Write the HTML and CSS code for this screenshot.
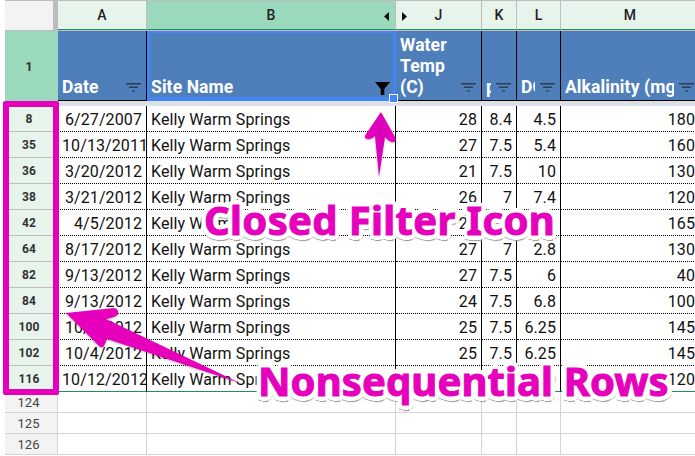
FILE: index.html
```html
<!DOCTYPE html>
<html lang="en">
<head>
<meta charset="utf-8">
<title>Filtered spreadsheet</title>
<link rel="stylesheet" href="styles.css">
</head>
<body>
<svg class="defs" width="0" height="0" aria-hidden="true">
  <symbol id="fl" viewBox="0 0 15 9"><path d="M0 0h15v1.4H0zM3 3.6h9V5H3zM6 7.2h3v1.4H6z"/></symbol>
</svg>
<main class="sheet">
  <div class="row colhead">
    <div class="corner"></div>
    <div class="c">A</div>
    <div class="c selcol">B<svg class="tri tri-l" viewBox="0 0 5 9"><path d="M5 0v9L0 4.5z"/></svg></div>
    <div class="c"><svg class="tri tri-r" viewBox="0 0 5 9"><path d="M0 0v9l5-4.5z"/></svg>J</div>
    <div class="c">K</div>
    <div class="c">L</div>
    <div class="c">M</div>
  </div>
  <div class="row head">
    <div class="rh rh-sel">1</div>
    <div class="hc"><span class="lb">Date</span><svg class="fi"><use href="#fl"/></svg></div>
    <div class="hc hc-sel"><span class="lb">Site Name</span><svg class="closed" viewBox="0 0 15 13"><path d="M0 0h15L9.3 7v6H5.700V7z"/></svg></div>
    <div class="hc"><span class="lb wrap">Water Temp (C)</span><svg class="fi"><use href="#fl"/></svg></div>
    <div class="hc"><span class="lb">pH</span><svg class="fi"><use href="#fl"/></svg></div>
    <div class="hc"><span class="lb">DO (mg/L)</span><svg class="fi"><use href="#fl"/></svg></div>
    <div class="hc"><span class="lb">Alkalinity (mg/L)</span><svg class="fi"><use href="#fl"/></svg></div>
  </div>
  <div class="freeze"></div>
  <div class="row data"><div class="rh">8</div><div class="n">6/27/2007</div><div class="t">Kelly Warm Springs</div><div class="n">28</div><div class="n">8.4</div><div class="n">4.5</div><div class="n">180</div></div>
  <div class="row data"><div class="rh">35</div><div class="n">10/13/2011</div><div class="t">Kelly Warm Springs</div><div class="n">27</div><div class="n">7.5</div><div class="n">5.4</div><div class="n">160</div></div>
  <div class="row data"><div class="rh">36</div><div class="n">3/20/2012</div><div class="t">Kelly Warm Springs</div><div class="n">21</div><div class="n">7.5</div><div class="n">10</div><div class="n">130</div></div>
  <div class="row data"><div class="rh">38</div><div class="n">3/21/2012</div><div class="t">Kelly Warm Springs</div><div class="n">26</div><div class="n">7</div><div class="n">7.4</div><div class="n">120</div></div>
  <div class="row data"><div class="rh">42</div><div class="n">4/5/2012</div><div class="t">Kelly Warm Springs</div><div class="n">25</div><div class="n">7.5</div><div class="n">7</div><div class="n">165</div></div>
  <div class="row data"><div class="rh">64</div><div class="n">8/17/2012</div><div class="t">Kelly Warm Springs</div><div class="n">27</div><div class="n">7</div><div class="n">2.8</div><div class="n">130</div></div>
  <div class="row data"><div class="rh">82</div><div class="n">9/13/2012</div><div class="t">Kelly Warm Springs</div><div class="n">27</div><div class="n">7.5</div><div class="n">6</div><div class="n">40</div></div>
  <div class="row data"><div class="rh">84</div><div class="n">9/13/2012</div><div class="t">Kelly Warm Springs</div><div class="n">24</div><div class="n">7.5</div><div class="n">6.8</div><div class="n">100</div></div>
  <div class="row data"><div class="rh">100</div><div class="n">10/4/2012</div><div class="t">Kelly Warm Springs</div><div class="n">25</div><div class="n">7.5</div><div class="n">6.25</div><div class="n">145</div></div>
  <div class="row data"><div class="rh">102</div><div class="n">10/4/2012</div><div class="t">Kelly Warm Springs</div><div class="n">25</div><div class="n">7.5</div><div class="n">6.25</div><div class="n">145</div></div>
  <div class="row data last"><div class="rh">116</div><div class="n">10/12/2012</div><div class="t">Kelly Warm Springs</div><div class="n">25</div><div class="n">7.5</div><div class="n">10</div><div class="n">120</div></div>
  <div class="row empty"><div class="rh">124</div><div></div><div></div><div></div><div></div><div></div><div></div></div>
  <div class="row empty"><div class="rh">125</div><div></div><div></div><div></div><div></div><div></div><div></div></div>
  <div class="row empty"><div class="rh">126</div><div></div><div></div><div></div><div></div><div></div><div></div></div>
</main>

<div class="handle"></div>
<div class="rowbox"></div>
<svg class="arrows" viewBox="0 0 695 456" width="695" height="456" aria-hidden="true">
  <defs>
    <linearGradient id="mg" x1="0" x2="1" y1="0" y2="0">
      <stop offset="0" stop-color="#f000c0"/><stop offset=".5" stop-color="#d800b8"/><stop offset="1" stop-color="#f000c4"/>
    </linearGradient>
  </defs>
  <g class="arrow">
    <path fill="url(#mg)" d="M381 112L395 137Q397 142 393 142Q390 143 385 137L379 177L375 136Q371 140 368 139Q363 139 366 134Z"/>
    <path fill="#e600bc" d="M66 313L114 308Q119 309 118 314Q117 317 106 319L240 383L107 339L104 346Q101 349 98 345Z"/>
  </g>
</svg>
<div class="note note-filter">Closed Filter Icon</div>
<div class="note note-rows">Nonsequential Rows</div>
</body>
</html>
```

FILE: styles.css
```css
* { box-sizing: border-box; }

html, body {
  margin: 0;
  height: 100%;
  overflow: hidden;
  background: #fff;
}

.defs { position: absolute; }

.sheet {
  width: 695px;
  height: 456px;
  padding-left: 5px;
  overflow: hidden;
  display: flex;
  flex-direction: column;
  font-family: Roboto, "Liberation Sans", sans-serif;
  font-size: 16px;
  letter-spacing: 0.1px;
  color: #111;
}

.row {
  display: grid;
  grid-template-columns: 53px 89px 249px 86px 35px 44px 139px;
  flex: none;
}

/* column letters */
.colhead {
  height: 31px;
  background: #bdbdbd;
  padding-top: 1px;
  padding-bottom: 1px;
  font-size: 14px;
  color: #222;
}
.colhead .corner {
  background: #f3f3f3;
  border-right: 5px solid #bdbdbd;
}
.colhead .c {
  position: relative;
  display: flex;
  align-items: center;
  justify-content: center;
  background: #e6f4ec;
  border-right: 1px solid #bdbdbd;
  border-bottom: 1px solid #1e8e5a;
  font-weight: 500;
  padding-bottom: 1px;
}
.colhead .selcol { background: #9bd9bc; }

.tri {
  position: absolute;
  top: 11px;
  width: 5px;
  height: 9px;
  fill: #111;
}
.tri-l { right: 6px; }
.tri-r { left: 6px; }

/* row headers */
.rh {
  display: flex;
  align-items: center;
  justify-content: center;
  padding-right: 5px;
  background: #f3f3f3;
  border-right: 1px solid #c8c8c8;
  border-bottom: 1px solid #c8c8c8;
  font-size: 13px;
  color: #444;
}
.rh-sel {
  background: #9bd9bc;
  border: 0;
  font-weight: 700;
  color: #333;
}

/* frozen header row */
.head {
  height: 70px;
  background: #4f7fbb;
}

.hc {
  display: flex;
  align-items: flex-end;
  gap: 5px;
  padding: 0 5px 2px 4px;
  background: #4f7fbb;
  border-right: 1px solid #000;
  border-bottom: 1px solid #000;
  font-weight: 700;
  font-size: 17.5px;
  line-height: 21px;
  color: #fff;
}
.lb {
  flex: 1;
  min-width: 0;
  overflow: hidden;
  white-space: nowrap;
}
.lb.wrap { white-space: normal; }

.fi {
  flex: none;
  width: 15px;
  height: 9px;
  margin-bottom: 6px;
  fill: #2c3e50;
}
.closed {
  flex: none;
  width: 15px;
  height: 13px;
  margin: 0 0 3px;
  fill: #000;
}
.hc-sel {
  box-shadow: inset 3px 0 0 #4285f4, inset -2px 0 0 #4285f4, inset 0 -3px 0 #4285f4, inset 0 2px 0 #4285f4;
  border-color: #4285f4;
}

.freeze {
  flex: none;
  height: 5px;
  margin-left: 53px;
  background: #dadfe8;
}

/* data rows */
.data { height: 26px; }
.data > div {
  display: flex;
  align-items: center;
  padding-top: 1px;
  overflow: hidden;
  white-space: nowrap;
  border-bottom: 1px dotted #000;
}
.data .rh {
  justify-content: center;
  background: #e6f4ec;
  border-right: 0;
  border-bottom: 1px solid #bdbdbd;
  font-size: 12px;
  font-weight: 700;
  color: #333;
}
.data .n {
  justify-content: safe flex-end;
  padding-left: 4px;
  padding-right: 4px;
  border-right: 1px solid #000;
}
.data .t {
  padding-left: 4px;
  border-right: 1px solid #000;
}
.data.last > div { border-bottom: 1px solid #1e8e5a; }
.data.last .rh { border-bottom-color: #bdbdbd; }

/* empty rows */
.empty { height: 21px; }
.empty > div {
  border-right: 1px solid #d4d4d4;
  border-bottom: 1px solid #d4d4d4;
}

/* overlays */
.handle {
  position: absolute;
  left: 389px;
  top: 94px;
  width: 9px;
  height: 9px;
  background: #4285f4;
  border: 1px solid #fff;
}
.rowbox {
  position: absolute;
  left: 3px;
  top: 101px;
  width: 56px;
  height: 294px;
  border: 6px solid #e600bc;
  border-radius: 2px;
}
.arrows {
  position: absolute;
  left: 0;
  top: 0;
}
.arrow { filter: drop-shadow(0 1px 1px rgba(0, 0, 0, .25)); }

.note {
  position: absolute;
  font-family: "Noto Sans", sans-serif;
  font-weight: 700;
  font-size: 40px;
  line-height: 50px;
  white-space: nowrap;
  color: #e600bc;
  -webkit-text-stroke: 1px #e600bc;
  text-shadow:
    5px 0 0 #fff, -5px 0 0 #fff, 0 5px 0 #fff, 0 -5px 0 #fff,
    4px 3px 0 #fff, -4px 3px 0 #fff, 4px -3px 0 #fff, -4px -3px 0 #fff,
    3px 4px 0 #fff, -3px 4px 0 #fff, 3px -4px 0 #fff, -3px -4px 0 #fff,
    1px 6px 1px #999, 4px 4px 1px #aaa, -3px 5px 1px #aaa;
}
.note-filter { left: 204px; top: 195px; letter-spacing: 0.35px; }
.note-rows { left: 258px; top: 356px; letter-spacing: 0.1px; }
```
